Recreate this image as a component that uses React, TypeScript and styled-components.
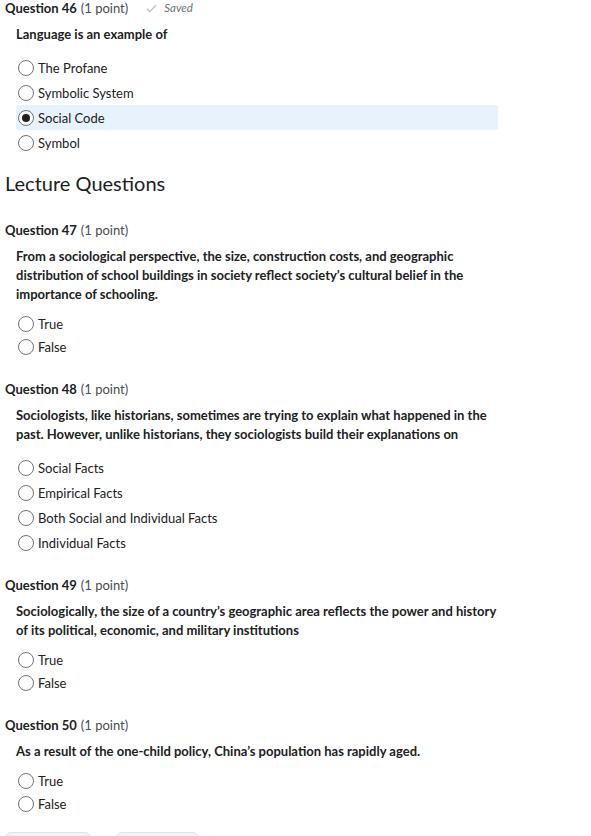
import React from "react";
import styled, { createGlobalStyle } from "styled-components";

const Global = createGlobalStyle`
  html, body { margin: 0; padding: 0; background: #ffffff; }
  body { font-family: Lato, "Noto Sans", sans-serif; color: #202122; }
`;

const Page = styled.div`
  display: flex;
  flex-direction: column;
  padding: 0 0 0 5px;
`;

const Question = styled.section<{ $gapAfter: number }>`
  display: flex;
  flex-direction: column;
  margin-bottom: ${(p) => p.$gapAfter}px;
`;

const Header = styled.div`
  display: flex;
  align-items: center;
  height: 16px;
  font-size: 13px;
  line-height: 16px;
`;

const QTitle = styled.span`
  font-weight: 700;
  color: #202122;
`;

const QPoints = styled.span`
  font-weight: 400;
  color: #494c4e;
  margin-left: 4px;
`;

const Saved = styled.span`
  display: flex;
  align-items: center;
  gap: 7px;
  margin-left: 18px;
  font-size: 11.5px;
  font-style: italic;
  color: #6e7376;
`;

const Prompt = styled.div`
  margin: 9px 0 0 11px;
  width: 482px;
  font-size: 13px;
  line-height: 19px;
  font-weight: 700;
  color: #202122;
`;

const Options = styled.div<{ $top: number }>`
  display: flex;
  flex-direction: column;
  margin: ${(p) => p.$top}px 0 0 11px;
  width: 482px;
`;

const Option = styled.label<{ $h: number; $selected?: boolean }>`
  display: flex;
  align-items: center;
  gap: 4px;
  height: ${(p) => p.$h}px;
  padding-left: 2px;
  font-size: 13px;
  color: #202122;
  background: ${(p) => (p.$selected ? "#e8f2fc" : "transparent")};
  border-radius: 2px;
`;

const Radio = styled.span<{ $checked?: boolean }>`
  box-sizing: border-box;
  width: 16px;
  height: 16px;
  border-radius: 50%;
  border: 1px solid #6e7376;
  background: #ffffff;
  display: flex;
  align-items: center;
  justify-content: center;
  flex: none;
  &::after {
    content: "";
    display: ${(p) => (p.$checked ? "block" : "none")};
    width: 8px;
    height: 8px;
    border-radius: 50%;
    background: #202122;
  }
`;

const SectionTitle = styled.h2`
  margin: 0 0 27px 0;
  font-size: 20px;
  line-height: 24px;
  font-weight: 400;
  color: #202122;
`;

const ButtonRow = styled.div`
  display: flex;
  gap: 25px;
`;

const Button = styled.button<{ $w: number }>`
  width: ${(p) => p.$w}px;
  height: 40px;
  border: 1px solid #dfe4ee;
  border-radius: 6px;
  background: #f1f3f8;
`;

const Check = () => (
  <svg width="11" height="9" viewBox="0 0 11 9" fill="none">
    <path d="M1 4.8 L3.8 7.6 L10 1.2" stroke="#b8c0c7" strokeWidth="1.3" />
  </svg>
);

type Q = {
  n: number;
  prompt: string;
  options: string[];
  selected?: number;
  saved?: boolean;
  tf?: boolean;
};

const QuestionBlock = ({ q, gapAfter }: { q: Q; gapAfter: number }) => {
  const h = q.tf ? 23 : 25;
  return (
    <Question $gapAfter={gapAfter}>
      <Header>
        <QTitle>Question {q.n}</QTitle>
        <QPoints>(1 point)</QPoints>
        {q.saved && (
          <Saved>
            <Check />
            Saved
          </Saved>
        )}
      </Header>
      <Prompt>{q.prompt}</Prompt>
      <Options $top={q.tf ? 8 : 11}>
        {q.options.map((o, i) => (
          <Option key={o} $h={h} $selected={q.selected === i}>
            <Radio $checked={q.selected === i} />
            {o}
          </Option>
        ))}
      </Options>
    </Question>
  );
};

const q46: Q = {
  n: 46,
  prompt: "Language is an example of",
  options: ["The Profane", "Symbolic System", "Social Code", "Symbol"],
  selected: 2,
  saved: true,
};

const rest: Q[] = [
  {
    n: 47,
    prompt:
      "From a sociological perspective, the size, construction costs, and geographic distribution of school buildings in society reflect society\u2019s cultural belief in the importance of schooling.",
    options: ["True", "False"],
    tf: true,
  },
  {
    n: 48,
    prompt:
      "Sociologists, like historians, sometimes are trying to explain what happened in the past. However, unlike historians, they sociologists build their explanations on",
    options: ["Social Facts", "Empirical Facts", "Both Social and Individual Facts", "Individual Facts"],
  },
  {
    n: 49,
    prompt:
      "Sociologically, the size of a country\u2019s geographic area reflects the power and history of its political, economic, and military institutions",
    options: ["True", "False"],
    tf: true,
  },
  {
    n: 50,
    prompt: "As a result of the one-child policy, China\u2019s population has rapidly aged.",
    options: ["True", "False"],
    tf: true,
  },
];

export default function App() {
  return (
    <>
      <Global />
      <Page>
        <QuestionBlock q={q46} gapAfter={16} />
        <SectionTitle>Lecture Questions</SectionTitle>
        {rest.map((q, i) => (
          <QuestionBlock
            key={q.n}
            q={q}
            gapAfter={i === rest.length - 1 ? 17 : q.tf ? 23 : 22}
          />
        ))}
        <ButtonRow>
          <Button $w={86} aria-label="Save all responses" />
          <Button $w={83} aria-label="Go to submit quiz" />
        </ButtonRow>
      </Page>
    </>
  );
}
